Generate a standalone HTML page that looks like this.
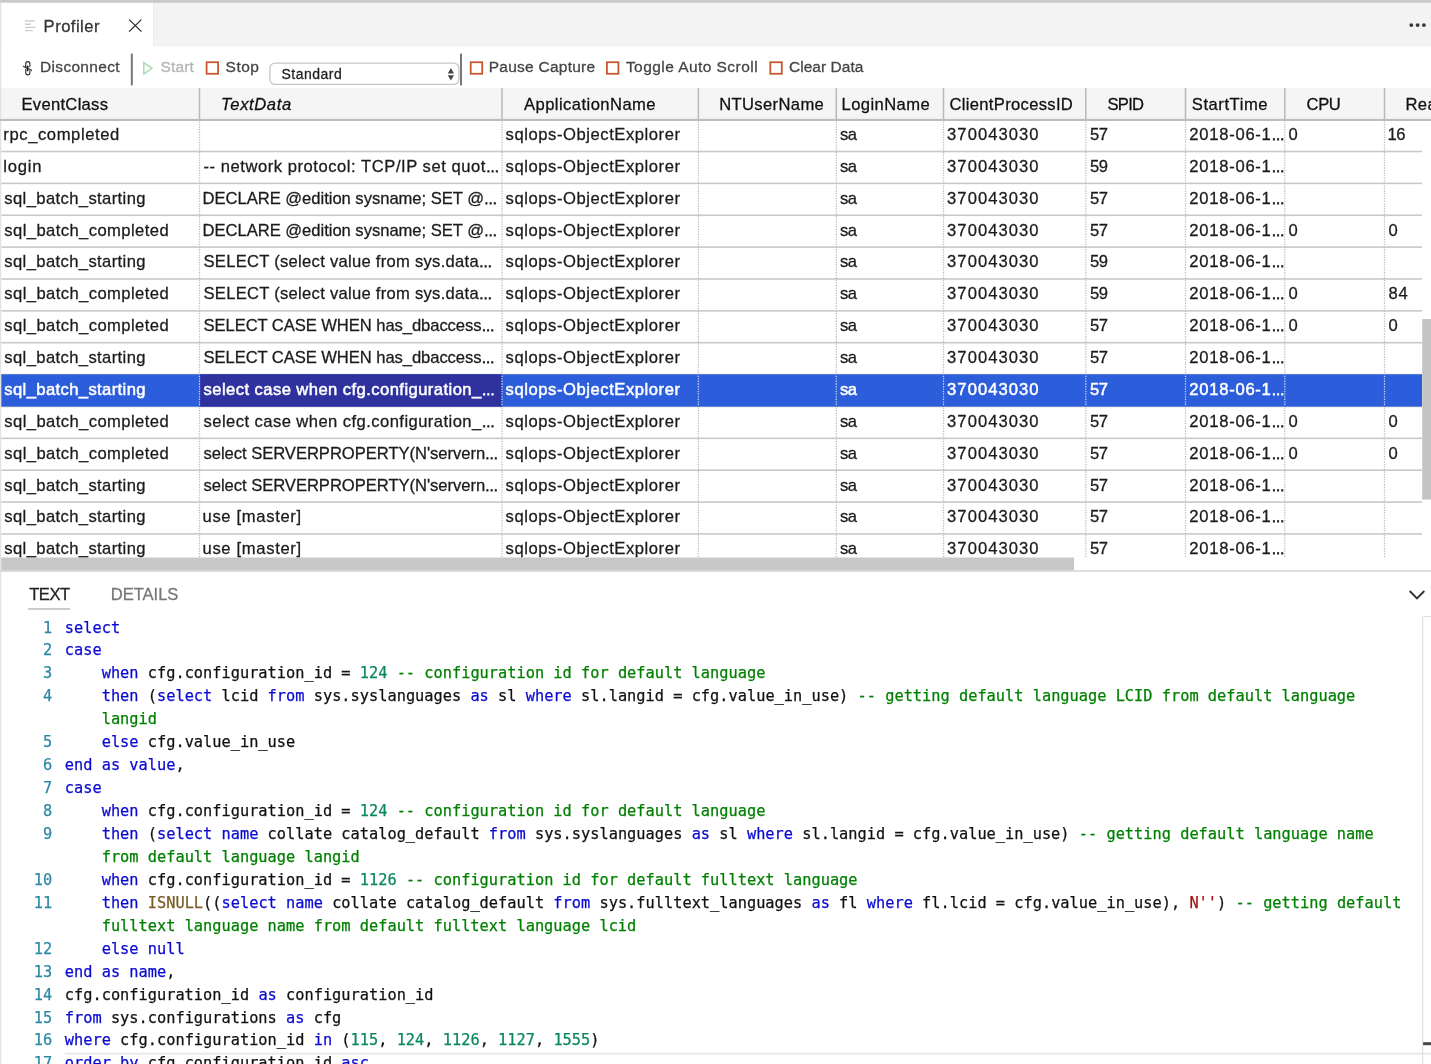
<!DOCTYPE html>
<html lang="en">
<head>
<meta charset="utf-8">
<title>Profiler</title>
<style>
html,body{margin:0;padding:0;background:#fff;}
body{width:1431px;height:1064px;overflow:hidden;position:relative;font-family:"Liberation Sans",sans-serif;}
#app{position:absolute;left:0;top:0;width:1431px;height:1064px;overflow:hidden;background:#fff;will-change:transform;}
#app div,#app svg,.t,.ln,.cl{position:absolute;}
.geo{left:0;top:0;}
.grp{left:0;top:0;width:0;height:0;}
.t{white-space:pre;font-family:"Liberation Sans",sans-serif;-webkit-text-stroke:0.28px;}
.el{font-size:13.2px;letter-spacing:0;-webkit-text-stroke:0.75px;}
.t.w{-webkit-text-stroke:0.5px;}
.rowtext{left:0;top:0;width:1431px;height:557.5px;overflow:hidden;}
/* editor */
.ed{left:0;top:0;width:1431px;height:1064px;font-family:"DejaVu Sans Mono","Liberation Mono",monospace;font-size:15.3px;line-height:22.94px;letter-spacing:0.008px;color:#111;-webkit-text-stroke:0.25px;}
.ln{left:0;width:52.3px;text-align:right;color:#2b88a4;white-space:pre;height:22.94px;}
.cl{left:64.8px;white-space:pre;height:22.94px;}
.k{color:#0a0ad2;}
.c{color:#008000;}
.n{color:#09885a;}
.f{color:#795e26;}
.s{color:#a31515;}

</style>
</head>
<body>
<div id="app">
<svg class="geo" width="1431" height="1064" viewBox="0 0 1431 1064">
<rect x="0.00" y="0.00" width="1431.00" height="47.00" fill="#f3f3f3"/>
<rect x="1.30" y="0.00" width="151.80" height="47.50" fill="#ffffff"/>
<rect x="0.00" y="46.40" width="1431.00" height="42.00" fill="#ffffff"/>
<rect x="153.10" y="2.75" width="0.80" height="43.60" fill="#ebebeb"/>
<rect x="0.00" y="0.00" width="1431.00" height="2.75" fill="#c9c9c9"/>
<rect x="0.00" y="88.10" width="1431.00" height="31.50" fill="#f5f5f5"/>
<rect x="0.00" y="2.60" width="1.25" height="1062.00" fill="#e2e2e2"/>
<rect x="198.75" y="88.10" width="1.50" height="31.00" fill="#b9b9b9"/>
<rect x="501.20" y="88.10" width="1.50" height="31.00" fill="#b9b9b9"/>
<rect x="697.65" y="88.10" width="1.50" height="31.00" fill="#b9b9b9"/>
<rect x="835.55" y="88.10" width="1.50" height="31.00" fill="#b9b9b9"/>
<rect x="942.75" y="88.10" width="1.50" height="31.00" fill="#b9b9b9"/>
<rect x="1085.05" y="88.10" width="1.50" height="31.00" fill="#b9b9b9"/>
<rect x="1184.75" y="88.10" width="1.50" height="31.00" fill="#b9b9b9"/>
<rect x="1284.05" y="88.10" width="1.50" height="31.00" fill="#b9b9b9"/>
<rect x="1383.75" y="88.10" width="1.50" height="31.00" fill="#b9b9b9"/>
<rect x="0.00" y="118.90" width="1431.00" height="2.10" fill="#bcbcbc"/>
<clipPath id="gc"><rect x="0" y="120.6" width="1422.0" height="436.90"/></clipPath><g clip-path="url(#gc)">
<rect x="1.30" y="150.70" width="1420.70" height="1.60" fill="#c9c9c9"/>
<rect x="1.30" y="182.57" width="1420.70" height="1.60" fill="#c9c9c9"/>
<rect x="1.30" y="214.44" width="1420.70" height="1.60" fill="#c9c9c9"/>
<rect x="1.30" y="246.31" width="1420.70" height="1.60" fill="#c9c9c9"/>
<rect x="1.30" y="278.18" width="1420.70" height="1.60" fill="#c9c9c9"/>
<rect x="1.30" y="310.05" width="1420.70" height="1.60" fill="#c9c9c9"/>
<rect x="1.30" y="341.92" width="1420.70" height="1.60" fill="#c9c9c9"/>
<rect x="1.30" y="373.79" width="1420.70" height="1.60" fill="#c9c9c9"/>
<rect x="1.30" y="405.66" width="1420.70" height="1.60" fill="#c9c9c9"/>
<rect x="1.30" y="437.53" width="1420.70" height="1.60" fill="#c9c9c9"/>
<rect x="1.30" y="469.40" width="1420.70" height="1.60" fill="#c9c9c9"/>
<rect x="1.30" y="501.27" width="1420.70" height="1.60" fill="#c9c9c9"/>
<rect x="1.30" y="533.14" width="1420.70" height="1.60" fill="#c9c9c9"/>
<rect x="1.30" y="565.01" width="1420.70" height="1.60" fill="#c9c9c9"/>
<rect x="1.30" y="374.30" width="1420.70" height="32.30" fill="#2c5dda"/>
<rect x="200.10" y="374.30" width="301.85" height="32.30" fill="#2e319e"/>
<path d="M199.50 121.4V374.30M199.50 407.50V557.5" stroke="#bdbdbd" stroke-width="1.28" stroke-dasharray="1.277 1.277" fill="none"/>
<path d="M199.50 375.70V406.20" stroke="#e8ecfb" stroke-opacity=".85" stroke-width="1.28" stroke-dasharray="1.277 1.277" fill="none"/>
<path d="M501.95 121.4V374.30M501.95 407.50V557.5" stroke="#bdbdbd" stroke-width="1.28" stroke-dasharray="1.277 1.277" fill="none"/>
<path d="M501.95 375.70V406.20" stroke="#e8ecfb" stroke-opacity=".85" stroke-width="1.28" stroke-dasharray="1.277 1.277" fill="none"/>
<path d="M698.40 121.4V374.30M698.40 407.50V557.5" stroke="#bdbdbd" stroke-width="1.28" stroke-dasharray="1.277 1.277" fill="none"/>
<path d="M698.40 375.70V406.20" stroke="#e8ecfb" stroke-opacity=".85" stroke-width="1.28" stroke-dasharray="1.277 1.277" fill="none"/>
<path d="M836.30 121.4V374.30M836.30 407.50V557.5" stroke="#bdbdbd" stroke-width="1.28" stroke-dasharray="1.277 1.277" fill="none"/>
<path d="M836.30 375.70V406.20" stroke="#e8ecfb" stroke-opacity=".85" stroke-width="1.28" stroke-dasharray="1.277 1.277" fill="none"/>
<path d="M943.50 121.4V374.30M943.50 407.50V557.5" stroke="#bdbdbd" stroke-width="1.28" stroke-dasharray="1.277 1.277" fill="none"/>
<path d="M943.50 375.70V406.20" stroke="#e8ecfb" stroke-opacity=".85" stroke-width="1.28" stroke-dasharray="1.277 1.277" fill="none"/>
<path d="M1085.80 121.4V374.30M1085.80 407.50V557.5" stroke="#bdbdbd" stroke-width="1.28" stroke-dasharray="1.277 1.277" fill="none"/>
<path d="M1085.80 375.70V406.20" stroke="#e8ecfb" stroke-opacity=".85" stroke-width="1.28" stroke-dasharray="1.277 1.277" fill="none"/>
<path d="M1185.50 121.4V374.30M1185.50 407.50V557.5" stroke="#bdbdbd" stroke-width="1.28" stroke-dasharray="1.277 1.277" fill="none"/>
<path d="M1185.50 375.70V406.20" stroke="#e8ecfb" stroke-opacity=".85" stroke-width="1.28" stroke-dasharray="1.277 1.277" fill="none"/>
<path d="M1284.80 121.4V374.30M1284.80 407.50V557.5" stroke="#bdbdbd" stroke-width="1.28" stroke-dasharray="1.277 1.277" fill="none"/>
<path d="M1284.80 375.70V406.20" stroke="#e8ecfb" stroke-opacity=".85" stroke-width="1.28" stroke-dasharray="1.277 1.277" fill="none"/>
<path d="M1384.50 121.4V374.30M1384.50 407.50V557.5" stroke="#bdbdbd" stroke-width="1.28" stroke-dasharray="1.277 1.277" fill="none"/>
<path d="M1384.50 375.70V406.20" stroke="#e8ecfb" stroke-opacity=".85" stroke-width="1.28" stroke-dasharray="1.277 1.277" fill="none"/>
</g>
<rect x="1.30" y="557.50" width="1072.70" height="13.60" fill="#c8c8c8"/>
<rect x="1422.20" y="319.00" width="8.80" height="180.50" fill="#c4c4c4"/>
<rect x="0.00" y="570.10" width="1431.00" height="1.80" fill="#dadada"/>
<rect x="130.85" y="53.60" width="1.90" height="31.80" fill="#717171"/>
<rect x="460.05" y="53.60" width="1.90" height="31.80" fill="#717171"/>
<rect x="206.60" y="62.25" width="11.5" height="11.5" fill="#fff" stroke="#c8522c" stroke-width="1.75"/>
<rect x="470.70" y="62.25" width="11.5" height="11.5" fill="#fff" stroke="#c8522c" stroke-width="1.75"/>
<rect x="606.90" y="62.25" width="11.5" height="11.5" fill="#fff" stroke="#c8522c" stroke-width="1.75"/>
<rect x="770.30" y="62.25" width="11.5" height="11.5" fill="#fff" stroke="#c8522c" stroke-width="1.75"/>
<rect x="269.85" y="63.05" width="189" height="21.4" rx="5.2" ry="5.2" fill="#fff" stroke="#c6c6c6" stroke-width="1.3"/>
<path d="M447.8 73.4 L450.9 68.1 L454 73.4 Z M447.8 75.2 L450.9 80.5 L454 75.2 Z" fill="#444"/>
<g fill="#c4c4c4"><rect x="25" y="20.3" width="10.2" height="1.2"/><rect x="25" y="23.6" width="5.9" height="1.2"/><rect x="25" y="26.9" width="10.2" height="1.1"/><rect x="25" y="30.1" width="7.8" height="1.1"/></g>
<path d="M129.2 19.6 L141.5 31.6 M141.3 19.6 L129.1 31.6" stroke="#262626" stroke-width="1.2" fill="none"/>
<g fill="#3a3a3a"><circle cx="1411.3" cy="25.1" r="1.95"/><circle cx="1417.6" cy="25.1" r="1.95"/><circle cx="1423.9" cy="25.1" r="1.95"/></g>
<g fill="none" stroke="#333" stroke-width="1.15" stroke-linecap="round"><path d="M25.7 67.6 V64.2 a2.1 2.6 0 0 1 4.2 0 V66.6"/><path d="M25.7 69.4 V72.5 a2.1 2.3 0 0 0 4.2 0 V70.6"/><path d="M27.6 66.4 V70.4" stroke-width="1.7" stroke="#111"/><path d="M23.4 66.3 L25.4 67.4 L27.6 68.2 L29.8 69.2 Q31.2 69.4 31.6 70.6"/></g>
<path d="M143.8 62.6 L152 68.3 L143.8 74 Z" fill="none" stroke="#a9dcb1" stroke-width="1.5" stroke-linejoin="miter"/>
<rect x="28.10" y="608.20" width="41.90" height="1.50" fill="#bdbdbd"/>
<path d="M1410.2 591.5 L1417 598.5 L1423.8 591.5" fill="none" stroke="#333" stroke-width="1.9" stroke-linecap="round" stroke-linejoin="miter"/>
<rect x="64.80" y="1052.50" width="1366.20" height="2.30" fill="#ebebeb"/>
<path d="M1431 616.7 H1422.7 V1064" fill="none" stroke="#dcdcdc" stroke-width="1"/>
<rect x="1423.10" y="1042.20" width="7.90" height="3.00" fill="#4a4a4a"/>
</svg>
<div class="grp tabs">
<span class="t" style="left:43.60px;top:16.00px;font-size:16.6px;line-height:21px;letter-spacing:0.481px;color:#333;">Profiler</span>
</div>
<div class="grp toolbar">
<span class="t" style="left:40.10px;top:57.00px;font-size:15.5px;line-height:19px;letter-spacing:0.303px;color:#444;">Disconnect</span>
<span class="t" style="left:160.60px;top:57.00px;font-size:15.5px;line-height:19px;letter-spacing:0.118px;color:#b5b5b5;">Start</span>
<span class="t" style="left:225.60px;top:57.00px;font-size:15.5px;line-height:19px;letter-spacing:0.445px;color:#444;">Stop</span>
<span class="t" style="left:281.50px;top:65.00px;font-size:14.0px;line-height:18px;letter-spacing:0.481px;color:#222;">Standard</span>
<span class="t" style="left:488.70px;top:57.00px;font-size:15.5px;line-height:19px;letter-spacing:0.252px;color:#444;">Pause Capture</span>
<span class="t" style="left:625.90px;top:57.00px;font-size:15.5px;line-height:19px;letter-spacing:0.448px;color:#444;">Toggle Auto Scroll</span>
<span class="t" style="left:789.00px;top:57.00px;font-size:15.5px;line-height:19px;letter-spacing:0.037px;color:#444;">Clear Data</span>
</div>
<div class="grp grid-header">
<span class="t" style="left:21.50px;top:94.00px;font-size:16.6px;line-height:21px;letter-spacing:0.286px;color:#111;">EventClass</span>
<span class="t" style="left:221.10px;top:94.00px;font-size:16.6px;line-height:21px;letter-spacing:0.604px;color:#111;font-style:italic;">TextData</span>
<span class="t" style="left:524.00px;top:94.00px;font-size:16.6px;line-height:21px;letter-spacing:0.435px;color:#111;">ApplicationName</span>
<span class="t" style="left:719.20px;top:94.00px;font-size:16.6px;line-height:21px;letter-spacing:0.357px;color:#111;">NTUserName</span>
<span class="t" style="left:841.50px;top:94.00px;font-size:16.6px;line-height:21px;letter-spacing:0.408px;color:#111;">LoginName</span>
<span class="t" style="left:949.50px;top:94.00px;font-size:16.6px;line-height:21px;letter-spacing:0.309px;color:#111;">ClientProcessID</span>
<span class="t" style="left:1107.50px;top:94.00px;font-size:16.6px;line-height:21px;letter-spacing:-0.749px;color:#111;">SPID</span>
<span class="t" style="left:1191.80px;top:94.00px;font-size:16.6px;line-height:21px;letter-spacing:0.553px;color:#111;">StartTime</span>
<span class="t" style="left:1306.50px;top:94.00px;font-size:16.6px;line-height:21px;letter-spacing:-0.350px;color:#111;">CPU</span>
<span class="t" style="left:1405.40px;top:94.00px;font-size:16.6px;line-height:21px;letter-spacing:0.450px;color:#111;">Reads</span>
</div>
<div class="rowtext">
<div class="grp grid-row">
<span class="t" style="left:3.30px;top:124.00px;font-size:16.6px;line-height:21px;letter-spacing:0.599px;color:#1b1b1b;">rpc_completed</span>
<span class="t" style="left:505.60px;top:124.00px;font-size:16.6px;line-height:21px;letter-spacing:0.559px;color:#1b1b1b;">sqlops-ObjectExplorer</span>
<span class="t" style="left:839.90px;top:124.00px;font-size:16.6px;line-height:21px;letter-spacing:-0.350px;color:#1b1b1b;">sa</span>
<span class="t" style="left:947.10px;top:124.00px;font-size:16.6px;line-height:21px;letter-spacing:1.046px;color:#1b1b1b;">370043030</span>
<span class="t" style="left:1089.90px;top:124.00px;font-size:16.6px;line-height:21px;letter-spacing:-0.350px;color:#1b1b1b;">57</span>
<span class="t" style="left:1189.30px;top:124.00px;font-size:16.6px;line-height:21px;letter-spacing:0.735px;color:#1b1b1b;">2018-06-1<span class="el">…</span></span>
<span class="t" style="left:1288.60px;top:124.00px;font-size:16.6px;line-height:21px;letter-spacing:0.000px;color:#1b1b1b;">0</span>
<span class="t" style="left:1387.40px;top:124.00px;font-size:16.6px;line-height:21px;letter-spacing:-0.350px;color:#1b1b1b;">16</span>
</div>
<div class="grp grid-row">
<span class="t" style="left:3.30px;top:156.00px;font-size:16.6px;line-height:21px;letter-spacing:0.767px;color:#1b1b1b;">login</span>
<span class="t" style="left:203.50px;top:156.00px;font-size:16.6px;line-height:21px;letter-spacing:0.536px;color:#1b1b1b;">-- network protocol: TCP/IP set quot<span class="el">…</span></span>
<span class="t" style="left:505.60px;top:156.00px;font-size:16.6px;line-height:21px;letter-spacing:0.559px;color:#1b1b1b;">sqlops-ObjectExplorer</span>
<span class="t" style="left:839.90px;top:156.00px;font-size:16.6px;line-height:21px;letter-spacing:-0.350px;color:#1b1b1b;">sa</span>
<span class="t" style="left:947.10px;top:156.00px;font-size:16.6px;line-height:21px;letter-spacing:1.046px;color:#1b1b1b;">370043030</span>
<span class="t" style="left:1089.90px;top:156.00px;font-size:16.6px;line-height:21px;letter-spacing:-0.350px;color:#1b1b1b;">59</span>
<span class="t" style="left:1189.30px;top:156.00px;font-size:16.6px;line-height:21px;letter-spacing:0.735px;color:#1b1b1b;">2018-06-1<span class="el">…</span></span>
</div>
<div class="grp grid-row">
<span class="t" style="left:4.30px;top:188.00px;font-size:16.6px;line-height:21px;letter-spacing:0.385px;color:#1b1b1b;">sql_batch_starting</span>
<span class="t" style="left:202.50px;top:188.00px;font-size:16.6px;line-height:21px;letter-spacing:-0.028px;color:#1b1b1b;">DECLARE @edition sysname; SET @<span class="el">…</span></span>
<span class="t" style="left:505.60px;top:188.00px;font-size:16.6px;line-height:21px;letter-spacing:0.559px;color:#1b1b1b;">sqlops-ObjectExplorer</span>
<span class="t" style="left:839.90px;top:188.00px;font-size:16.6px;line-height:21px;letter-spacing:-0.350px;color:#1b1b1b;">sa</span>
<span class="t" style="left:947.10px;top:188.00px;font-size:16.6px;line-height:21px;letter-spacing:1.046px;color:#1b1b1b;">370043030</span>
<span class="t" style="left:1089.90px;top:188.00px;font-size:16.6px;line-height:21px;letter-spacing:-0.350px;color:#1b1b1b;">57</span>
<span class="t" style="left:1189.30px;top:188.00px;font-size:16.6px;line-height:21px;letter-spacing:0.735px;color:#1b1b1b;">2018-06-1<span class="el">…</span></span>
</div>
<div class="grp grid-row">
<span class="t" style="left:4.30px;top:220.00px;font-size:16.6px;line-height:21px;letter-spacing:0.417px;color:#1b1b1b;">sql_batch_completed</span>
<span class="t" style="left:202.50px;top:220.00px;font-size:16.6px;line-height:21px;letter-spacing:-0.028px;color:#1b1b1b;">DECLARE @edition sysname; SET @<span class="el">…</span></span>
<span class="t" style="left:505.60px;top:220.00px;font-size:16.6px;line-height:21px;letter-spacing:0.559px;color:#1b1b1b;">sqlops-ObjectExplorer</span>
<span class="t" style="left:839.90px;top:220.00px;font-size:16.6px;line-height:21px;letter-spacing:-0.350px;color:#1b1b1b;">sa</span>
<span class="t" style="left:947.10px;top:220.00px;font-size:16.6px;line-height:21px;letter-spacing:1.046px;color:#1b1b1b;">370043030</span>
<span class="t" style="left:1089.90px;top:220.00px;font-size:16.6px;line-height:21px;letter-spacing:-0.350px;color:#1b1b1b;">57</span>
<span class="t" style="left:1189.30px;top:220.00px;font-size:16.6px;line-height:21px;letter-spacing:0.735px;color:#1b1b1b;">2018-06-1<span class="el">…</span></span>
<span class="t" style="left:1288.60px;top:220.00px;font-size:16.6px;line-height:21px;letter-spacing:0.000px;color:#1b1b1b;">0</span>
<span class="t" style="left:1388.40px;top:220.00px;font-size:16.6px;line-height:21px;letter-spacing:0.000px;color:#1b1b1b;">0</span>
</div>
<div class="grp grid-row">
<span class="t" style="left:4.30px;top:251.00px;font-size:16.6px;line-height:21px;letter-spacing:0.385px;color:#1b1b1b;">sql_batch_starting</span>
<span class="t" style="left:203.50px;top:251.00px;font-size:16.6px;line-height:21px;letter-spacing:0.270px;color:#1b1b1b;">SELECT (select value from sys.data<span class="el">…</span></span>
<span class="t" style="left:505.60px;top:251.00px;font-size:16.6px;line-height:21px;letter-spacing:0.559px;color:#1b1b1b;">sqlops-ObjectExplorer</span>
<span class="t" style="left:839.90px;top:251.00px;font-size:16.6px;line-height:21px;letter-spacing:-0.350px;color:#1b1b1b;">sa</span>
<span class="t" style="left:947.10px;top:251.00px;font-size:16.6px;line-height:21px;letter-spacing:1.046px;color:#1b1b1b;">370043030</span>
<span class="t" style="left:1089.90px;top:251.00px;font-size:16.6px;line-height:21px;letter-spacing:-0.350px;color:#1b1b1b;">59</span>
<span class="t" style="left:1189.30px;top:251.00px;font-size:16.6px;line-height:21px;letter-spacing:0.735px;color:#1b1b1b;">2018-06-1<span class="el">…</span></span>
</div>
<div class="grp grid-row">
<span class="t" style="left:4.30px;top:283.00px;font-size:16.6px;line-height:21px;letter-spacing:0.417px;color:#1b1b1b;">sql_batch_completed</span>
<span class="t" style="left:203.50px;top:283.00px;font-size:16.6px;line-height:21px;letter-spacing:0.270px;color:#1b1b1b;">SELECT (select value from sys.data<span class="el">…</span></span>
<span class="t" style="left:505.60px;top:283.00px;font-size:16.6px;line-height:21px;letter-spacing:0.559px;color:#1b1b1b;">sqlops-ObjectExplorer</span>
<span class="t" style="left:839.90px;top:283.00px;font-size:16.6px;line-height:21px;letter-spacing:-0.350px;color:#1b1b1b;">sa</span>
<span class="t" style="left:947.10px;top:283.00px;font-size:16.6px;line-height:21px;letter-spacing:1.046px;color:#1b1b1b;">370043030</span>
<span class="t" style="left:1089.90px;top:283.00px;font-size:16.6px;line-height:21px;letter-spacing:-0.350px;color:#1b1b1b;">59</span>
<span class="t" style="left:1189.30px;top:283.00px;font-size:16.6px;line-height:21px;letter-spacing:0.735px;color:#1b1b1b;">2018-06-1<span class="el">…</span></span>
<span class="t" style="left:1288.60px;top:283.00px;font-size:16.6px;line-height:21px;letter-spacing:0.000px;color:#1b1b1b;">0</span>
<span class="t" style="left:1388.40px;top:283.00px;font-size:16.6px;line-height:21px;letter-spacing:0.800px;color:#1b1b1b;">84</span>
</div>
<div class="grp grid-row">
<span class="t" style="left:4.30px;top:315.00px;font-size:16.6px;line-height:21px;letter-spacing:0.417px;color:#1b1b1b;">sql_batch_completed</span>
<span class="t" style="left:203.50px;top:315.00px;font-size:16.6px;line-height:21px;letter-spacing:-0.073px;color:#1b1b1b;">SELECT CASE WHEN has_dbaccess<span class="el">…</span></span>
<span class="t" style="left:505.60px;top:315.00px;font-size:16.6px;line-height:21px;letter-spacing:0.559px;color:#1b1b1b;">sqlops-ObjectExplorer</span>
<span class="t" style="left:839.90px;top:315.00px;font-size:16.6px;line-height:21px;letter-spacing:-0.350px;color:#1b1b1b;">sa</span>
<span class="t" style="left:947.10px;top:315.00px;font-size:16.6px;line-height:21px;letter-spacing:1.046px;color:#1b1b1b;">370043030</span>
<span class="t" style="left:1089.90px;top:315.00px;font-size:16.6px;line-height:21px;letter-spacing:-0.350px;color:#1b1b1b;">57</span>
<span class="t" style="left:1189.30px;top:315.00px;font-size:16.6px;line-height:21px;letter-spacing:0.735px;color:#1b1b1b;">2018-06-1<span class="el">…</span></span>
<span class="t" style="left:1288.60px;top:315.00px;font-size:16.6px;line-height:21px;letter-spacing:0.000px;color:#1b1b1b;">0</span>
<span class="t" style="left:1388.40px;top:315.00px;font-size:16.6px;line-height:21px;letter-spacing:0.000px;color:#1b1b1b;">0</span>
</div>
<div class="grp grid-row">
<span class="t" style="left:4.30px;top:347.00px;font-size:16.6px;line-height:21px;letter-spacing:0.385px;color:#1b1b1b;">sql_batch_starting</span>
<span class="t" style="left:203.50px;top:347.00px;font-size:16.6px;line-height:21px;letter-spacing:-0.073px;color:#1b1b1b;">SELECT CASE WHEN has_dbaccess<span class="el">…</span></span>
<span class="t" style="left:505.60px;top:347.00px;font-size:16.6px;line-height:21px;letter-spacing:0.559px;color:#1b1b1b;">sqlops-ObjectExplorer</span>
<span class="t" style="left:839.90px;top:347.00px;font-size:16.6px;line-height:21px;letter-spacing:-0.350px;color:#1b1b1b;">sa</span>
<span class="t" style="left:947.10px;top:347.00px;font-size:16.6px;line-height:21px;letter-spacing:1.046px;color:#1b1b1b;">370043030</span>
<span class="t" style="left:1089.90px;top:347.00px;font-size:16.6px;line-height:21px;letter-spacing:-0.350px;color:#1b1b1b;">57</span>
<span class="t" style="left:1189.30px;top:347.00px;font-size:16.6px;line-height:21px;letter-spacing:0.735px;color:#1b1b1b;">2018-06-1<span class="el">…</span></span>
</div>
<div class="grp grid-row selected">
<span class="t w" style="left:4.30px;top:379.00px;font-size:16.6px;line-height:21px;letter-spacing:0.385px;color:#fff;">sql_batch_starting</span>
<span class="t w" style="left:203.50px;top:379.00px;font-size:16.6px;line-height:21px;letter-spacing:0.436px;color:#fff;">select case when cfg.configuration_<span class="el">…</span></span>
<span class="t w" style="left:505.60px;top:379.00px;font-size:16.6px;line-height:21px;letter-spacing:0.559px;color:#fff;">sqlops-ObjectExplorer</span>
<span class="t w" style="left:839.90px;top:379.00px;font-size:16.6px;line-height:21px;letter-spacing:-0.350px;color:#fff;">sa</span>
<span class="t w" style="left:947.10px;top:379.00px;font-size:16.6px;line-height:21px;letter-spacing:1.046px;color:#fff;">370043030</span>
<span class="t w" style="left:1089.90px;top:379.00px;font-size:16.6px;line-height:21px;letter-spacing:-0.350px;color:#fff;">57</span>
<span class="t w" style="left:1189.30px;top:379.00px;font-size:16.6px;line-height:21px;letter-spacing:0.735px;color:#fff;">2018-06-1<span class="el">…</span></span>
</div>
<div class="grp grid-row">
<span class="t" style="left:4.30px;top:411.00px;font-size:16.6px;line-height:21px;letter-spacing:0.417px;color:#1b1b1b;">sql_batch_completed</span>
<span class="t" style="left:203.50px;top:411.00px;font-size:16.6px;line-height:21px;letter-spacing:0.436px;color:#1b1b1b;">select case when cfg.configuration_<span class="el">…</span></span>
<span class="t" style="left:505.60px;top:411.00px;font-size:16.6px;line-height:21px;letter-spacing:0.559px;color:#1b1b1b;">sqlops-ObjectExplorer</span>
<span class="t" style="left:839.90px;top:411.00px;font-size:16.6px;line-height:21px;letter-spacing:-0.350px;color:#1b1b1b;">sa</span>
<span class="t" style="left:947.10px;top:411.00px;font-size:16.6px;line-height:21px;letter-spacing:1.046px;color:#1b1b1b;">370043030</span>
<span class="t" style="left:1089.90px;top:411.00px;font-size:16.6px;line-height:21px;letter-spacing:-0.350px;color:#1b1b1b;">57</span>
<span class="t" style="left:1189.30px;top:411.00px;font-size:16.6px;line-height:21px;letter-spacing:0.735px;color:#1b1b1b;">2018-06-1<span class="el">…</span></span>
<span class="t" style="left:1288.60px;top:411.00px;font-size:16.6px;line-height:21px;letter-spacing:0.000px;color:#1b1b1b;">0</span>
<span class="t" style="left:1388.40px;top:411.00px;font-size:16.6px;line-height:21px;letter-spacing:0.000px;color:#1b1b1b;">0</span>
</div>
<div class="grp grid-row">
<span class="t" style="left:4.30px;top:443.00px;font-size:16.6px;line-height:21px;letter-spacing:0.417px;color:#1b1b1b;">sql_batch_completed</span>
<span class="t" style="left:203.50px;top:443.00px;font-size:16.6px;line-height:21px;letter-spacing:-0.042px;color:#1b1b1b;">select SERVERPROPERTY(N'servern<span class="el">…</span></span>
<span class="t" style="left:505.60px;top:443.00px;font-size:16.6px;line-height:21px;letter-spacing:0.559px;color:#1b1b1b;">sqlops-ObjectExplorer</span>
<span class="t" style="left:839.90px;top:443.00px;font-size:16.6px;line-height:21px;letter-spacing:-0.350px;color:#1b1b1b;">sa</span>
<span class="t" style="left:947.10px;top:443.00px;font-size:16.6px;line-height:21px;letter-spacing:1.046px;color:#1b1b1b;">370043030</span>
<span class="t" style="left:1089.90px;top:443.00px;font-size:16.6px;line-height:21px;letter-spacing:-0.350px;color:#1b1b1b;">57</span>
<span class="t" style="left:1189.30px;top:443.00px;font-size:16.6px;line-height:21px;letter-spacing:0.735px;color:#1b1b1b;">2018-06-1<span class="el">…</span></span>
<span class="t" style="left:1288.60px;top:443.00px;font-size:16.6px;line-height:21px;letter-spacing:0.000px;color:#1b1b1b;">0</span>
<span class="t" style="left:1388.40px;top:443.00px;font-size:16.6px;line-height:21px;letter-spacing:0.000px;color:#1b1b1b;">0</span>
</div>
<div class="grp grid-row">
<span class="t" style="left:4.30px;top:475.00px;font-size:16.6px;line-height:21px;letter-spacing:0.385px;color:#1b1b1b;">sql_batch_starting</span>
<span class="t" style="left:203.50px;top:475.00px;font-size:16.6px;line-height:21px;letter-spacing:-0.042px;color:#1b1b1b;">select SERVERPROPERTY(N'servern<span class="el">…</span></span>
<span class="t" style="left:505.60px;top:475.00px;font-size:16.6px;line-height:21px;letter-spacing:0.559px;color:#1b1b1b;">sqlops-ObjectExplorer</span>
<span class="t" style="left:839.90px;top:475.00px;font-size:16.6px;line-height:21px;letter-spacing:-0.350px;color:#1b1b1b;">sa</span>
<span class="t" style="left:947.10px;top:475.00px;font-size:16.6px;line-height:21px;letter-spacing:1.046px;color:#1b1b1b;">370043030</span>
<span class="t" style="left:1089.90px;top:475.00px;font-size:16.6px;line-height:21px;letter-spacing:-0.350px;color:#1b1b1b;">57</span>
<span class="t" style="left:1189.30px;top:475.00px;font-size:16.6px;line-height:21px;letter-spacing:0.735px;color:#1b1b1b;">2018-06-1<span class="el">…</span></span>
</div>
<div class="grp grid-row">
<span class="t" style="left:4.30px;top:506.00px;font-size:16.6px;line-height:21px;letter-spacing:0.385px;color:#1b1b1b;">sql_batch_starting</span>
<span class="t" style="left:202.50px;top:506.00px;font-size:16.6px;line-height:21px;letter-spacing:0.665px;color:#1b1b1b;">use [master]</span>
<span class="t" style="left:505.60px;top:506.00px;font-size:16.6px;line-height:21px;letter-spacing:0.559px;color:#1b1b1b;">sqlops-ObjectExplorer</span>
<span class="t" style="left:839.90px;top:506.00px;font-size:16.6px;line-height:21px;letter-spacing:-0.350px;color:#1b1b1b;">sa</span>
<span class="t" style="left:947.10px;top:506.00px;font-size:16.6px;line-height:21px;letter-spacing:1.046px;color:#1b1b1b;">370043030</span>
<span class="t" style="left:1089.90px;top:506.00px;font-size:16.6px;line-height:21px;letter-spacing:-0.350px;color:#1b1b1b;">57</span>
<span class="t" style="left:1189.30px;top:506.00px;font-size:16.6px;line-height:21px;letter-spacing:0.735px;color:#1b1b1b;">2018-06-1<span class="el">…</span></span>
</div>
<div class="grp grid-row">
<span class="t" style="left:4.30px;top:538.00px;font-size:16.6px;line-height:21px;letter-spacing:0.385px;color:#1b1b1b;">sql_batch_starting</span>
<span class="t" style="left:202.50px;top:538.00px;font-size:16.6px;line-height:21px;letter-spacing:0.665px;color:#1b1b1b;">use [master]</span>
<span class="t" style="left:505.60px;top:538.00px;font-size:16.6px;line-height:21px;letter-spacing:0.559px;color:#1b1b1b;">sqlops-ObjectExplorer</span>
<span class="t" style="left:839.90px;top:538.00px;font-size:16.6px;line-height:21px;letter-spacing:-0.350px;color:#1b1b1b;">sa</span>
<span class="t" style="left:947.10px;top:538.00px;font-size:16.6px;line-height:21px;letter-spacing:1.046px;color:#1b1b1b;">370043030</span>
<span class="t" style="left:1089.90px;top:538.00px;font-size:16.6px;line-height:21px;letter-spacing:-0.350px;color:#1b1b1b;">57</span>
<span class="t" style="left:1189.30px;top:538.00px;font-size:16.6px;line-height:21px;letter-spacing:0.735px;color:#1b1b1b;">2018-06-1<span class="el">…</span></span>
</div>
</div>
<div class="grp panel-tabs">
<span class="t" style="left:29.20px;top:584.00px;font-size:16.6px;line-height:21px;letter-spacing:-0.491px;color:#222;">TEXT</span>
<span class="t" style="left:110.80px;top:584.00px;font-size:16.6px;line-height:21px;letter-spacing:-0.060px;color:#777;">DETAILS</span>
</div>
<div class="ed">
<div class="ln" style="top:616.55px">1</div>
<div class="cl" style="top:616.55px"><span class="k">select</span></div>
<div class="ln" style="top:639.49px">2</div>
<div class="cl" style="top:639.49px"><span class="k">case</span></div>
<div class="ln" style="top:662.43px">3</div>
<div class="cl" style="top:662.43px">    <span class="k">when</span> cfg.configuration_id = <span class="n">124</span> <span class="c">-- configuration id for default language</span></div>
<div class="ln" style="top:685.37px">4</div>
<div class="cl" style="top:685.37px">    <span class="k">then</span> (<span class="k">select</span> lcid <span class="k">from</span> sys.syslanguages <span class="k">as</span> sl <span class="k">where</span> sl.langid = cfg.value_in_use) <span class="c">-- getting default language LCID from default language</span></div>
<div class="cl" style="top:708.31px">    <span class="c">langid</span></div>
<div class="ln" style="top:731.25px">5</div>
<div class="cl" style="top:731.25px">    <span class="k">else</span> cfg.value_in_use</div>
<div class="ln" style="top:754.19px">6</div>
<div class="cl" style="top:754.19px"><span class="k">end</span> <span class="k">as</span> <span class="k">value</span>,</div>
<div class="ln" style="top:777.13px">7</div>
<div class="cl" style="top:777.13px"><span class="k">case</span></div>
<div class="ln" style="top:800.07px">8</div>
<div class="cl" style="top:800.07px">    <span class="k">when</span> cfg.configuration_id = <span class="n">124</span> <span class="c">-- configuration id for default language</span></div>
<div class="ln" style="top:823.01px">9</div>
<div class="cl" style="top:823.01px">    <span class="k">then</span> (<span class="k">select</span> <span class="k">name</span> collate catalog_default <span class="k">from</span> sys.syslanguages <span class="k">as</span> sl <span class="k">where</span> sl.langid = cfg.value_in_use) <span class="c">-- getting default language name</span></div>
<div class="cl" style="top:845.95px">    <span class="c">from default language langid</span></div>
<div class="ln" style="top:868.89px">10</div>
<div class="cl" style="top:868.89px">    <span class="k">when</span> cfg.configuration_id = <span class="n">1126</span> <span class="c">-- configuration id for default fulltext language</span></div>
<div class="ln" style="top:891.83px">11</div>
<div class="cl" style="top:891.83px">    <span class="k">then</span> <span class="f">ISNULL</span>((<span class="k">select</span> <span class="k">name</span> collate catalog_default <span class="k">from</span> sys.fulltext_languages <span class="k">as</span> fl <span class="k">where</span> fl.lcid = cfg.value_in_use), <span class="s">N''</span>) <span class="c">-- getting default</span></div>
<div class="cl" style="top:914.77px">    <span class="c">fulltext language name from default fulltext language lcid</span></div>
<div class="ln" style="top:937.71px">12</div>
<div class="cl" style="top:937.71px">    <span class="k">else</span> <span class="k">null</span></div>
<div class="ln" style="top:960.65px">13</div>
<div class="cl" style="top:960.65px"><span class="k">end</span> <span class="k">as</span> <span class="k">name</span>,</div>
<div class="ln" style="top:983.59px">14</div>
<div class="cl" style="top:983.59px">cfg.configuration_id <span class="k">as</span> configuration_id</div>
<div class="ln" style="top:1006.53px">15</div>
<div class="cl" style="top:1006.53px"><span class="k">from</span> sys.configurations <span class="k">as</span> cfg</div>
<div class="ln" style="top:1029.47px">16</div>
<div class="cl" style="top:1029.47px"><span class="k">where</span> cfg.configuration_id <span class="k">in</span> (<span class="n">115</span>, <span class="n">124</span>, <span class="n">1126</span>, <span class="n">1127</span>, <span class="n">1555</span>)</div>
<div class="ln" style="top:1052.41px">17</div>
<div class="cl" style="top:1052.41px"><span class="k">order</span> <span class="k">by</span> cfg.configuration_id <span class="k">asc</span></div>
</div>
</div>
</body>
</html>
